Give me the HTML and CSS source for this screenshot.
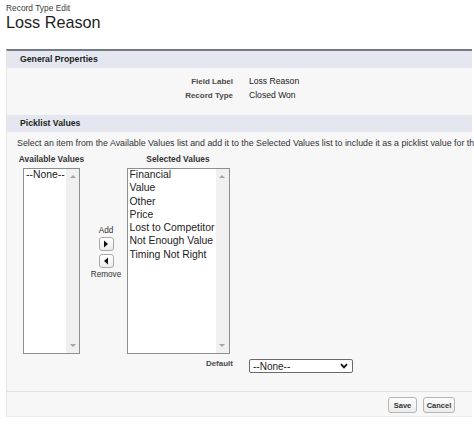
FILE: index.html
```html
<!DOCTYPE html>
<html>
<head>
<meta charset="utf-8">
<link rel="stylesheet" href="styles.css">
</head>
<body>
<div class="page-head">
  <div class="kicker">Record Type Edit</div>
  <h1 class="title">Loss Reason</h1>
</div>
<div class="panel">
  <div class="section-title">General Properties</div>
  <div class="details">
    <div class="grid-row">
      <div class="label">Field Label</div>
      <div class="value">Loss Reason</div>
    </div>
    <div class="grid-row">
      <div class="label">Record Type</div>
      <div class="value">Closed Won</div>
    </div>
  </div>
  <div class="section-title">Picklist Values</div>
  <div class="picklist">
    <div class="instructions">Select an item from the Available Values list and add it to the Selected Values list to include it as a picklist value for this record type.</div>
    <div class="dual">
      <div class="col col-avail">
        <div class="col-head">Available Values</div>
        <div class="listbox lb-avail">
          <div class="items"><div>--None--</div></div>
          <div class="scroll"><span class="arr up"></span><span class="arr down"></span></div>
        </div>
      </div>
      <div class="col col-mid">
        <div class="mid-label">Add</div>
        <button class="move"><svg width="6" height="8" viewBox="0 0 6 8"><path d="M1 0.5 L5 4 L1 7.5 Z" fill="#111"/></svg></button>
        <button class="move"><svg width="6" height="8" viewBox="0 0 6 8"><path d="M5 0.5 L1 4 L5 7.5 Z" fill="#111"/></svg></button>
        <div class="mid-label">Remove</div>
      </div>
      <div class="col col-sel">
        <div class="col-head">Selected Values</div>
        <div class="listbox lb-sel">
          <div class="items">
            <div>Financial</div>
            <div>Value</div>
            <div>Other</div>
            <div>Price</div>
            <div>Lost to Competitor</div>
            <div>Not Enough Value</div>
            <div>Timing Not Right</div>
          </div>
          <div class="scroll"><span class="arr up"></span><span class="arr down"></span></div>
        </div>
      </div>
    </div>
    <div class="grid-row default-row">
      <div class="label">Default</div>
      <div class="select">
        <span>--None--</span>
        <svg width="8" height="6" viewBox="0 0 8 6"><path d="M1 1.2 L4 4.4 L7 1.2" fill="none" stroke="#111" stroke-width="1.8"/></svg>
      </div>
    </div>
  </div>
  <div class="footer">
    <button class="btn btn-save">Save</button>
    <button class="btn btn-cancel">Cancel</button>
  </div>
</div>
</body>
</html>
```

FILE: styles.css
```css
* { box-sizing: border-box; }
html, body { margin: 0; padding: 0; }
body {
  width: 474px;
  height: 425px;
  overflow: hidden;
  background: #ffffff;
  font-family: "Liberation Sans", Arial, sans-serif;
  color: #222;
}
.page-head { padding: 3px 6px 0 6px; }
.kicker {
  font-size: 8.4px;
  line-height: 10px;
  color: #3c3c3c;
}
.title {
  margin: 0;
  font-size: 16.2px;
  line-height: 18px;
  font-weight: normal;
  color: #1e1e1e;
}
.panel {
  margin: 18px 0 0 6px;
  width: 466px;
  background: #f7f7f7;
  border-top: 2px solid #737a86;
  border-left: 1px solid #e6e6e6;
  border-bottom: 1px solid #ececec;
}
.section-title {
  height: 17px;
  line-height: 17px;
  padding-left: 13px;
  background: #e4e7ef;
  font-size: 8.7px;
  font-weight: bold;
  color: #222;
}
.details { padding: 6px 0 13px 0; }
.grid-row {
  display: grid;
  grid-template-columns: 226px 1fr;
  column-gap: 16px;
  align-items: center;
  height: 14px;
}
.label {
  text-align: right;
  font-size: 8px;
  font-weight: bold;
  color: #4a4a4a;
}
.value {
  font-size: 8.6px;
  color: #222;
}
.picklist { padding: 5px 0 18px 0; border-bottom: 1px solid #e2e2e2; }
.instructions {
  padding-left: 10px;
  margin-right: -2px;
  font-size: 8.85px;
  line-height: 12px;
  white-space: nowrap;
  overflow: hidden;
  color: #333;
}
.dual {
  display: flex;
  margin-top: 4px;
  padding-left: 10px;
}
.col {
  display: flex;
  flex-direction: column;
  align-items: center;
}
.col-avail { width: 69px; }
.col-mid { width: 40px; padding-top: 73px; }
.col-sel { width: 104px; }
.col-head {
  font-size: 8.4px;
  font-weight: bold;
  line-height: 12px;
  height: 12px;
  margin-bottom: 3px;
  color: #333;
  white-space: nowrap;
}
.listbox {
  display: flex;
  height: 186px;
  background: #fff;
  border: 1px solid #8e8e8e;
}
.lb-avail { width: 57px; }
.lb-sel { width: 103px; }
.items {
  flex: 1;
  font-size: 10.4px;
  line-height: 13.3px;
  padding-left: 2px;
  margin-top: -1px;
  color: #222;
  white-space: nowrap;
  overflow: hidden;
}
.scroll {
  width: 13px;
  background: #f0f0f0;
  display: flex;
  flex-direction: column;
  justify-content: space-between;
  align-items: center;
  padding: 6px 0;
}
.arr {
  width: 0;
  height: 0;
  border-left: 3px solid transparent;
  border-right: 3px solid transparent;
}
.arr.up { border-bottom: 3px solid #a5a5a5; }
.arr.down { border-top: 3px solid #a5a5a5; }
.mid-label {
  font-size: 8.2px;
  line-height: 10px;
  color: #333;
}
.move {
  width: 15px;
  height: 14px;
  margin: 1px 0 2px 0;
  padding: 0;
  display: flex;
  align-items: center;
  justify-content: center;
  border: 1px solid #a9a9a9;
  border-radius: 3px;
  background: linear-gradient(#ffffff, #ececec);
}
.default-row {
  margin-top: 5px;
  height: 14px;
  align-items: start;
}
.default-row .label { line-height: 10px; padding-top: 0; }
.select {
  width: 104px;
  height: 14px;
  display: flex;
  align-items: center;
  justify-content: space-between;
  padding: 0 4px 0 3px;
  background: #fff;
  border: 1px solid #6a6a6a;
  border-radius: 2px;
  font-size: 10px;
  color: #222;
}
.footer {
  display: flex;
  justify-content: flex-end;
  gap: 6px;
  padding: 5px 17px 3px 0;
}
.btn {
  height: 16px;
  padding: 0;
  font-family: "Liberation Sans", Arial, sans-serif;
  font-size: 7.5px;
  font-weight: bold;
  color: #333;
  border: 1px solid #b5b5b5;
  border-radius: 3px;
  background: linear-gradient(#fdfdfd, #ececec);
}
.btn-save { width: 29px; }
.btn-cancel { width: 32px; }
```
